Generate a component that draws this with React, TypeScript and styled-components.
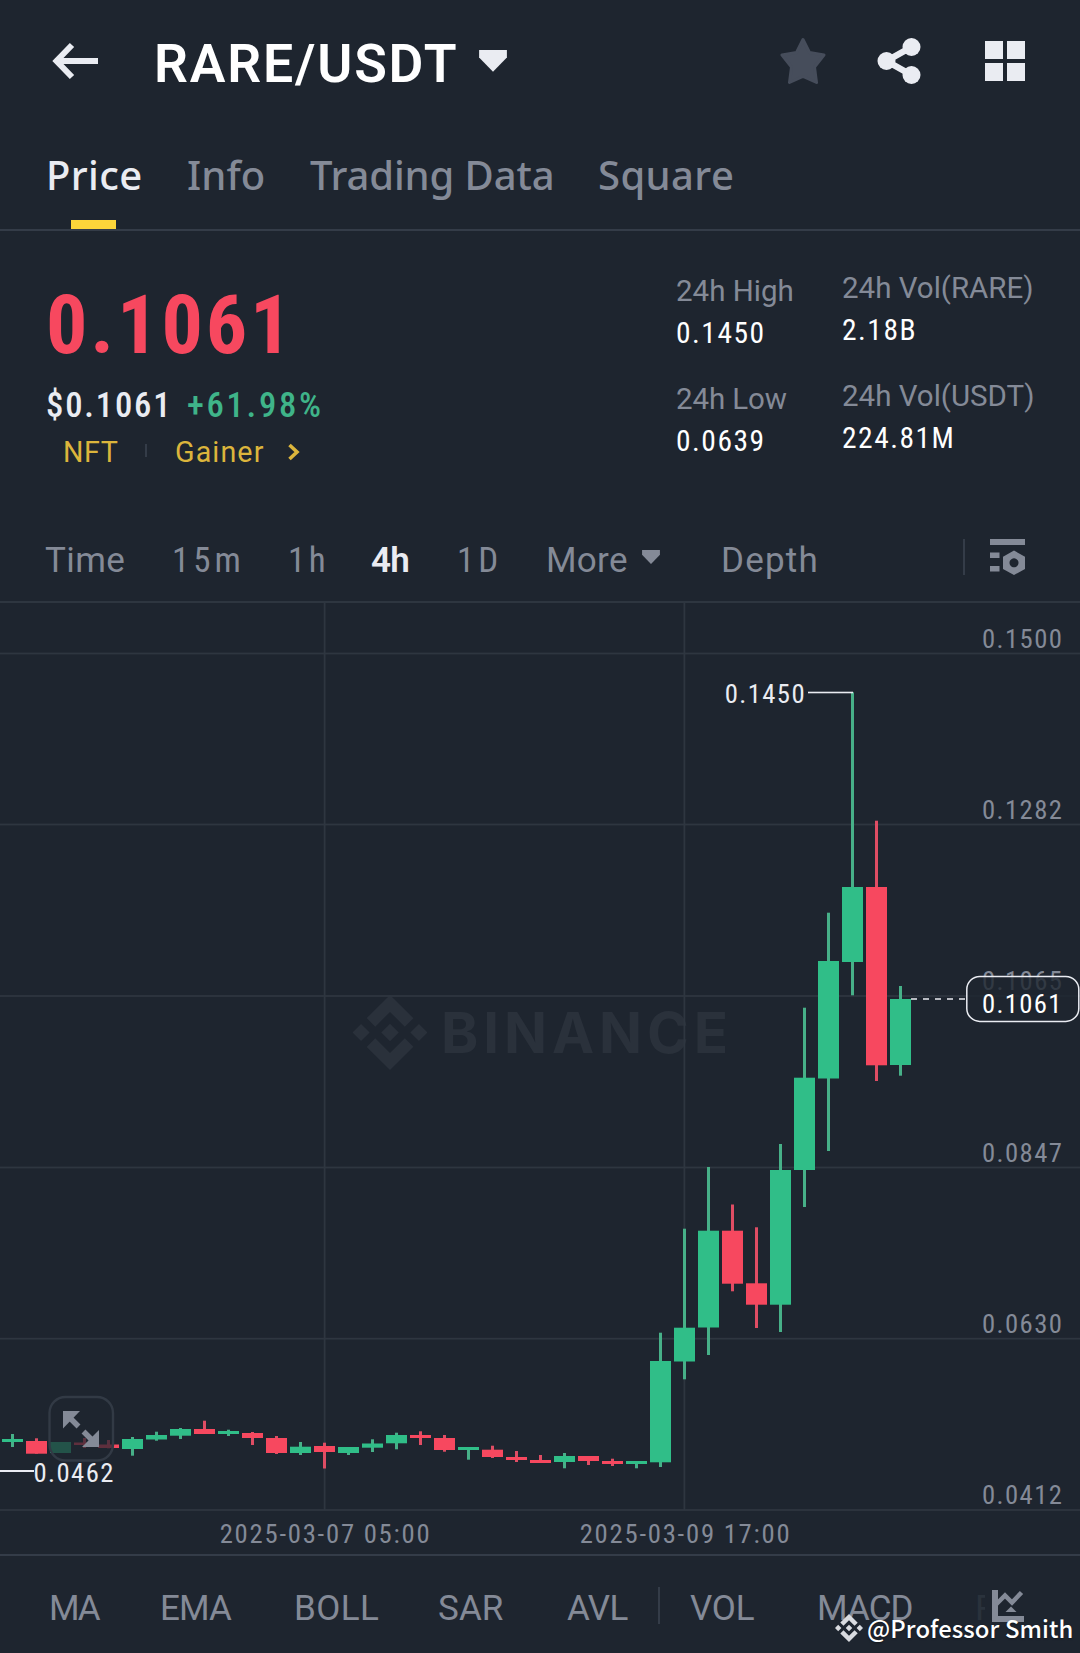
import React from 'react';
import styled, { createGlobalStyle } from 'styled-components';

const color = {
  bg: '#1e252f',
  line: '#2e3640',
  lineStrong: '#343c48',
  text: '#eaecf2',
  white: '#ffffff',
  muted: '#848a97',
  gold: '#dcb53c',
  yellow: '#fcd53a',
  green: '#30be88',
  greenWick: '#47b088',
  red: '#f7485f',
  redWick: '#df4d64',
};

const GlobalStyle = createGlobalStyle`
  body { margin: 0; background: ${color.bg}; }
  * { box-sizing: border-box; }
`;

const Screen = styled.main`
  position: relative;
  width: 1080px;
  height: 1653px;
  overflow: hidden;
  display: flex;
  flex-direction: column;
  background: ${color.bg};
  color: ${color.text};
  font-family: Roboto, 'Liberation Sans', sans-serif;
  white-space: nowrap;
  svg { display: block; flex: none; }
`;

const Header = styled.header`
  display: grid;
  grid-template-columns: 102px 325px 301px 97px 108px 42px;
  align-items: center;
  height: 122px;
  padding-left: 52px;
`;

const Title = styled.h1`
  margin: 0;
  padding-top: 5px;
  font-size: 53.5px;
  font-weight: 600;
  line-height: 60px;
  letter-spacing: 1.8px;
  color: ${color.white};
`;

const Tabs = styled.nav`
  display: grid;
  grid-template-columns: 141px 123px 288px 140px;
  height: 109px;
  padding-left: 46px;
  border-bottom: 2px solid ${color.lineStrong};
`;

const Tab = styled.div<{ $active?: boolean; $ls: number }>`
  display: flex;
  flex-direction: column;
  padding-top: 8px;
  font-family: 'Noto Sans', sans-serif;
  font-size: 40px;
  font-weight: 500;
  line-height: 90px;
  letter-spacing: ${(p) => p.$ls}px;
  color: ${(p) => (p.$active ? color.text : color.muted)};
`;

const TabMark = styled.span`
  width: 45px;
  height: 9px;
  margin-left: 25px;
  background: ${color.yellow};
`;

const Summary = styled.section`
  display: grid;
  grid-template-columns: 630px 166px 200px;
  height: 288px;
  padding-left: 46px;
`;

const Quote = styled.div`
  display: flex;
  flex-direction: column;
  padding-top: 54px;
`;

const Condensed = styled.span`
  font-family: Roboto, sans-serif;
  font-stretch: 75%;
`;

const LastPrice = styled(Condensed)`
  font-size: 82px;
  font-weight: 700;
  line-height: 80px;
  letter-spacing: 2.9px;
  color: ${color.red};
`;

const FiatRow = styled.div`
  display: grid;
  grid-template-columns: 141px 150px;
  margin-top: 20px;
  line-height: 40px;
`;

const Fiat = styled(Condensed)<{ $tone: string; $ls: number }>`
  font-size: 34.7px;
  font-weight: 500;
  letter-spacing: ${(p) => p.$ls}px;
  color: ${(p) => p.$tone};
`;

const TagRow = styled.div`
  display: grid;
  grid-template-columns: 82px 30px 113px 14px;
  align-items: center;
  height: 36px;
  margin-top: 9px;
  padding-left: 17px;
  font-size: 28.7px;
  line-height: 36px;
  color: ${color.gold};
`;

const Tag = styled.span<{ $ls: number }>`
  letter-spacing: ${(p) => p.$ls}px;
`;

const Divider = styled.span<{ $h: number; $lift?: number }>`
  width: 2px;
  height: ${(p) => p.$h}px;
  margin-bottom: ${(p) => p.$lift ?? 0}px;
  background: ${color.lineStrong};
`;

const StatColumn = styled.div<{ $top: number }>`
  display: flex;
  flex-direction: column;
  gap: 32px;
  padding-top: ${(p) => p.$top}px;
`;

const Stat = styled.div`
  display: flex;
  flex-direction: column;
  gap: 8px;
  font-size: 29.5px;
  line-height: 34px;
`;

const StatLabel = styled(Condensed)<{ $ls: number }>`
  font-stretch: 100%;
  letter-spacing: ${(p) => p.$ls}px;
  color: ${color.muted};
`;

const StatValue = styled(Condensed)`
  letter-spacing: 1.5px;
  color: ${color.white};
`;

const Intervals = styled.nav`
  display: grid;
  grid-template-columns: 127px 116px 83px 86px 89px 96px 79px 242px 27px 36px;
  align-items: center;
  height: 84px;
  padding-left: 45px;
  border-bottom: 2px solid ${color.line};
`;

const Interval = styled(Condensed)<{ $active?: boolean; $wide?: boolean; $ls: number }>`
  padding-top: 2px;
  font-size: 35px;
  font-stretch: ${(p) => (p.$wide ? '100%' : '75%')};
  font-weight: ${(p) => (p.$active ? 600 : 400)};
  line-height: 44px;
  letter-spacing: ${(p) => p.$ls}px;
  color: ${(p) => (p.$active ? color.text : color.muted)};
`;

const IntervalIcon = styled.span<{ $lift: number }>`
  display: flex;
  padding-bottom: ${(p) => p.$lift}px;
`;

const ChartArea = styled.section`
  height: 953px;
  border-bottom: 2px solid ${color.lineStrong};
`;

const ChartSvg = styled.svg`
  font-family: Roboto, sans-serif;
  font-stretch: 75%;
  font-size: 26.7px;
`;

const WatermarkText = styled.text`
  font-family: Inter, sans-serif;
  font-stretch: 100%;
  font-size: 56.5px;
  font-weight: 700;
  letter-spacing: 4.9px;
`;

const Indicators = styled.footer`
  display: grid;
  grid-template-columns: 111px 134px 144px 129px 91px 32px 127px 158px 17px 34px;
  align-items: center;
  height: 97px;
  padding: 9px 0 0 49px;
`;

const Indicator = styled.span<{ $ls: number; $faint?: boolean }>`
  overflow: hidden;
  width: ${(p) => (p.$faint ? '10px' : 'auto')};
  font-size: 35px;
  line-height: 44px;
  letter-spacing: ${(p) => p.$ls}px;
  color: ${(p) => (p.$faint ? '#2a323c' : color.muted)};
`;

const Signature = styled.div`
  position: absolute;
  left: 835px;
  top: 1610px;
  display: flex;
  align-items: center;
  gap: 4px;
  font-family: 'Noto Sans CJK SC', 'Noto Sans', sans-serif;
  font-size: 23.8px;
  font-weight: 500;
  line-height: 36px;
  letter-spacing: 0.12px;
  color: ${color.white};
  text-shadow: 0 1px 2px rgba(0, 0, 0, 0.4);
`;

type Candle = [up: boolean, top: number, bottom: number, high: number, low: number];

// Body top, body bottom, wick top and wick bottom on the vertical axis.
const candles: Candle[] = [
  [true, 1439, 1442, 1434, 1447],
  [false, 1441, 1453.7, 1438.3, 1453.7],
  [true, 1442, 1453, 1442, 1453],
  [false, 1442.5, 1445, 1438, 1448],
  [false, 1444.5, 1448, 1440, 1448.3],
  [true, 1439, 1449, 1437, 1455.7],
  [true, 1435, 1439.5, 1431.7, 1440.7],
  [true, 1429, 1435.7, 1428, 1439],
  [false, 1429, 1434, 1420.7, 1434],
  [true, 1431, 1434, 1429.7, 1436],
  [false, 1433, 1438, 1432, 1445],
  [false, 1438, 1453, 1436, 1454],
  [true, 1446.7, 1453, 1442, 1455],
  [false, 1446, 1452, 1442.7, 1468.5],
  [true, 1447, 1453, 1447, 1455],
  [true, 1443.5, 1447.7, 1439.3, 1452],
  [true, 1435, 1443.3, 1432.7, 1449.3],
  [false, 1435, 1438, 1431.3, 1445],
  [false, 1438, 1450, 1435, 1451.7],
  [true, 1447, 1450, 1447, 1459.7],
  [false, 1449.7, 1457, 1445.7, 1458],
  [false, 1457, 1460, 1451, 1462],
  [false, 1460, 1463, 1455, 1463],
  [true, 1456, 1462, 1453, 1468.3],
  [false, 1456, 1461, 1456, 1465],
  [false, 1461, 1464, 1458.7, 1466],
  [true, 1461, 1464, 1461, 1468.3],
  [true, 1361, 1462.3, 1332.7, 1467],
  [true, 1327.7, 1361.5, 1228.7, 1379.3],
  [true, 1230.7, 1327.5, 1167, 1355],
  [false, 1230.7, 1283.7, 1204.5, 1291.3],
  [false, 1283.3, 1304.7, 1227.3, 1328],
  [true, 1170, 1304.7, 1144, 1332],
  [true, 1077.7, 1170, 1007.7, 1207],
  [true, 961, 1078.5, 912.7, 1151],
  [true, 887, 962, 692.3, 995.3],
  [false, 887, 1065.3, 820.7, 1081],
  [true, 999, 1065, 986, 1075.7],
];

const priceAxis: [string, number][] = [
  ['0.1500', 653.5],
  ['0.1282', 824.5],
  ['0.1065', 996],
  ['0.0847', 1167.5],
  ['0.0630', 1338.7],
  ['0.0412', 1510],
];

const BinanceMark = ({ size, fill, x, y }: { size: number; fill: string; x?: number; y?: number }) => (
  <svg x={x} y={y} width={size} height={size} viewBox="0 0 126 126" fill={fill}>
    <path d="M38.2 53.2 63 28.4l24.9 24.9 14.4-14.4L63 0 23.8 38.8zM0 63l14.4-14.4L28.8 63 14.4 77.4zM38.2 72.8 63 97.6l24.9-24.9 14.4 14.4L63 126 23.8 87.2zM97.2 63l14.4-14.4L126 63l-14.4 14.4zM77.7 63 63 48.3 48.3 63 63 77.7z" />
  </svg>
);

const Chart = () => (
  <ChartSvg width="1080" height="951" viewBox="0 603 1080 951">
    <g fill="#2a313b">
      <BinanceMark x={352.5} y={995} size={75} fill="#2a313b" />
      <WatermarkText x="441" y="1052.5">BINANCE</WatermarkText>
    </g>
    <g fill={color.line}>
      {priceAxis.map(([label, y]) => (
        <rect key={label} x="0" y={y - 0.9} width="1080" height="1.8" />
      ))}
      <rect x="323.7" y="603" width="1.8" height="907" />
      <rect x="683.5" y="603" width="1.8" height="907" />
    </g>
    <g fill={color.muted} letterSpacing="1.4">
      {priceAxis.map(([label, y]) => (
        <text key={label} x="982" y={y - 5.7}>{label}</text>
      ))}
      <text x="219.7" y="1543" letterSpacing="1.75">2025-03-07 05:00</text>
      <text x="579.7" y="1543" letterSpacing="1.75">2025-03-09 17:00</text>
    </g>
    {candles.map(([up, top, bottom, high, low], i) => (
      <g key={i}>
        <rect x={11 + 24 * i} y={high} width="3" height={low - high} fill={up ? color.greenWick : color.redWick} />
        <rect x={2 + 24 * i} y={top} width="21" height={bottom - top} fill={up ? color.green : color.red} />
      </g>
    ))}
    <g fill={color.text} letterSpacing="1.4">
      <rect x="808" y="691.7" width="45" height="1.6" />
      <text x="724.7" y="703">0.1450</text>
      <rect x="0" y="1470" width="34" height="2" />
      <text x="33.5" y="1481.7">0.0462</text>
    </g>
    <path d="M911 999H966" stroke={color.text} strokeWidth="1.6" strokeDasharray="6 6" />
    <rect x="966.8" y="976.4" width="112" height="45" rx="13" fill={color.bg} fillOpacity="0.8" stroke={color.text} strokeWidth="1.5" />
    <text x="982" y="1012.7" fill={color.white} letterSpacing="1.3">0.1061</text>
    <rect x="49.5" y="1397" width="63.5" height="63.5" rx="16" fill={color.bg} fillOpacity="0.7" stroke="#323a45" strokeWidth="2.4" />
    <g fill={color.muted} stroke={color.muted}>
      <path d="M63 1411H80L63 1428.5Z" stroke="none" />
      <path d="M68 1416 78.500 1426.500M83.500 1431.500 94 1442" strokeWidth="5.500" />
      <path d="M99 1430V1447H82Z" stroke="none" />
    </g>
  </ChartSvg>
);

const BackIcon = () => (
  <svg width="46" height="38" viewBox="0 0 46 38" fill="none" stroke={color.text} strokeWidth="6">
    <path d="M4 19H46M20 3 4.500 19 20 35" />
  </svg>
);

const CaretIcon = ({ size, fill }: { size: number; fill: string }) => (
  <svg width={size} height={size * 0.78} viewBox="0 0 28 22" fill={fill}>
    <path d="M0 0H28V7.500L14 22 0 7.500Z" />
  </svg>
);

const StarIcon = () => (
  <svg width="46" height="48" viewBox="0 0 46 48" fill="#464d5b" stroke="#464d5b" strokeWidth="3" strokeLinejoin="round">
    <path d="M23 2.500 29.500 15.500 44 18 34.500 30 36.500 45.500 23 39.500 9.500 45.500 11.500 30 2 18 16.500 15.500Z" />
  </svg>
);

const ShareIcon = () => (
  <svg width="44" height="48" viewBox="0 0 44 48" fill={color.text} stroke={color.text}>
    <path d="M34.500 10 9.500 24 34.500 38" fill="none" strokeWidth="6.500" />
    <g stroke="none">
      <circle cx="9.500" cy="24" r="9" />
      <circle cx="34.500" cy="10" r="9" />
      <circle cx="34.500" cy="38" r="9" />
    </g>
  </svg>
);

const GridIcon = () => (
  <svg width="40" height="40" viewBox="0 0 40 40" fill={color.text}>
    <path d="M0 0H18V18H0ZM22 0H40V18H22ZM0 22H18V40H0ZM22 22H40V40H22Z" />
  </svg>
);

const ChevronIcon = () => (
  <svg width="12" height="18" viewBox="0 0 12 18" fill="none" stroke={color.gold} strokeWidth="3.600">
    <path d="M1.500 2 9 9 1.500 16" />
  </svg>
);

const ChartSettingsIcon = () => (
  <svg width="35" height="36" viewBox="0 0 35 36" fill={color.muted}>
    <path d="M0 0H35V6H0ZM0 13.500H9.500V19H0ZM0 27H9.500V32.500H0Z" />
    <path fillRule="evenodd" d="M24 11.500 35 17.700V30L24 36 13 30V17.700ZM24 19.300a4.500 4.500 0 1 0 .01 0Z" />
  </svg>
);

const LineChartIcon = () => (
  <svg width="32" height="32" viewBox="0 0 32 32" fill={color.muted}>
    <path d="M0 0H6V26H32V32H0Z" />
    <path d="M4 14.500 13 5.500 20 12.500 29.500 2.500" fill="none" stroke={color.muted} strokeWidth="4.500" />
    <path d="M13.500 22 19 16.500 24.500 22Z" />
  </svg>
);

export default function App() {
  return (
    <Screen>
      <GlobalStyle />
      <Header>
        <BackIcon />
        <Title>RARE/USDT</Title>
        <CaretIcon size={28} fill={color.text} />
        <StarIcon />
        <ShareIcon />
        <GridIcon />
      </Header>
      <Tabs>
        <Tab $active $ls={0.4}>Price<TabMark /></Tab>
        <Tab $ls={0.1}>Info</Tab>
        <Tab $ls={-0.1}>Trading Data</Tab>
        <Tab $ls={0.4}>Square</Tab>
      </Tabs>
      <Summary>
        <Quote>
          <LastPrice>0.1061</LastPrice>
          <FiatRow>
            <Fiat $tone={color.text} $ls={1.8}>$0.1061</Fiat>
            <Fiat $tone="#3fb489" $ls={2.7}>+61.98%</Fiat>
          </FiatRow>
          <TagRow>
            <Tag $ls={0.6}>NFT</Tag>
            <Divider $h={13} $lift={4} />
            <Tag $ls={1.1}>Gainer</Tag>
            <ChevronIcon />
          </TagRow>
        </Quote>
        <StatColumn $top={43}>
          <Stat><StatLabel $ls={0}>24h High</StatLabel><StatValue>0.1450</StatValue></Stat>
          <Stat><StatLabel $ls={-0.1}>24h Low</StatLabel><StatValue>0.0639</StatValue></Stat>
        </StatColumn>
        <StatColumn $top={40}>
          <Stat><StatLabel $ls={0}>24h Vol(RARE)</StatLabel><StatValue>2.18B</StatValue></Stat>
          <Stat><StatLabel $ls={0}>24h Vol(USDT)</StatLabel><StatValue>224.81M</StatValue></Stat>
        </StatColumn>
      </Summary>
      <Intervals>
        <Interval $wide $ls={0.4}>Time</Interval>
        <Interval $ls={4}>15m</Interval>
        <Interval $ls={3.5}>1h</Interval>
        <Interval $active $wide $ls={-0.8}>4h</Interval>
        <Interval $ls={4}>1D</Interval>
        <Interval $wide $ls={0.3}>More</Interval>
        <IntervalIcon $lift={6}><CaretIcon size={18} fill={color.muted} /></IntervalIcon>
        <Interval $wide $ls={1.2}>Depth</Interval>
        <Divider $h={36} $lift={7} />
        <IntervalIcon $lift={6}><ChartSettingsIcon /></IntervalIcon>
      </Intervals>
      <ChartArea>
        <Chart />
      </ChartArea>
      <Indicators>
        <Indicator $ls={-2}>MA</Indicator>
        <Indicator $ls={-0.9}>EMA</Indicator>
        <Indicator $ls={0.4}>BOLL</Indicator>
        <Indicator $ls={0.1}>SAR</Indicator>
        <Indicator $ls={-0.6}>AVL</Indicator>
        <Divider $h={37} $lift={8} />
        <Indicator $ls={-0.2}>VOL</Indicator>
        <Indicator $ls={-0.9}>MACD</Indicator>
        <Indicator $ls={0} $faint>R</Indicator>
        <IntervalIcon $lift={6}><LineChartIcon /></IntervalIcon>
      </Indicators>
      <Signature>
        <BinanceMark size={28} fill="#d9dbe0" />
        @Professor Smith
      </Signature>
    </Screen>
  );
}
